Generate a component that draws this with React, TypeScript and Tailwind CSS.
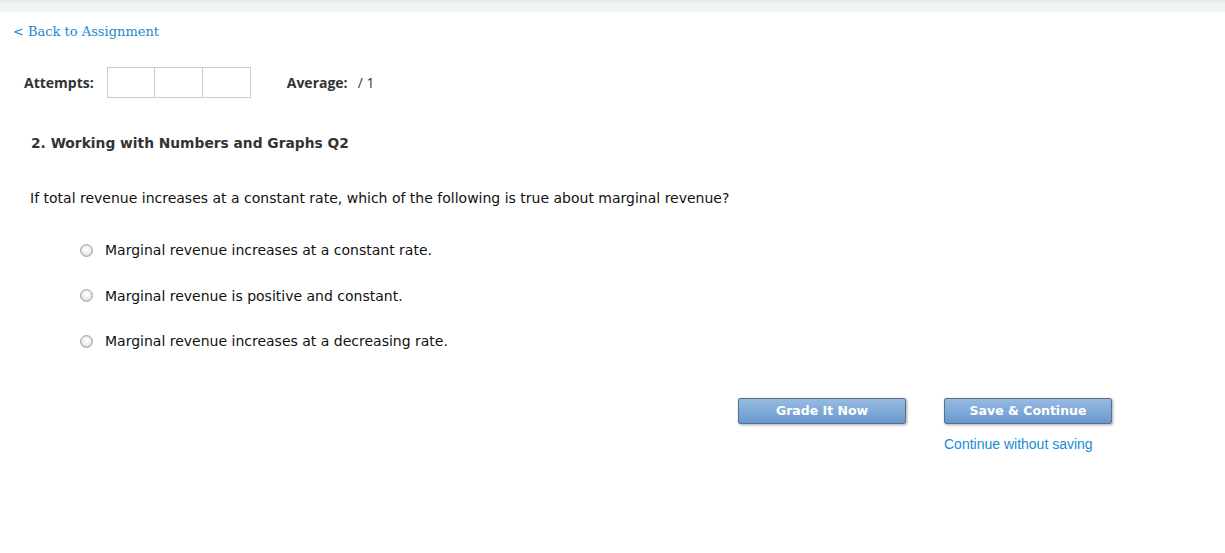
const options = [
  "Marginal revenue increases at a constant rate.",
  "Marginal revenue is positive and constant.",
  "Marginal revenue increases at a decreasing rate.",
];

function Radio() {
  return (
    <span className="inline-block h-[13px] w-[13px] shrink-0 rounded-full border border-[#a8a8a8] bg-[radial-gradient(circle_at_50%_40%,#ffffff_0%,#f0f0f0_45%,#cfcfcf_100%)] shadow-[inset_0_0_1px_#888]" />
  );
}

export default function App() {
  return (
    <div className="min-h-[553px] w-full bg-white">
      <div className="h-[12px] w-full border-t-2 border-[#e9edf0] bg-gradient-to-b from-[#f0f3f4] to-[#f4f6f5]" />

      <div className="pl-[13px] pt-[6px]">
        <a
          href="#"
          className="text-[13px] leading-[18px] text-[#2189d0] [font-family:'DejaVu_Serif','Liberation_Serif',serif]"
        >
          &lt; Back to Assignment
        </a>
      </div>

      <div className="mt-[25px] flex items-center pl-[24px] [font-family:'Open_Sans','Liberation_Sans',sans-serif]">
        <span className="text-[14px] font-bold text-[#333]">Attempts:</span>
        <div className="ml-[13px] flex">
          <div className="h-[31px] w-[48px] border border-[#cccccc]" />
          <div className="h-[31px] w-[48px] border border-l-0 border-[#cccccc]" />
          <div className="h-[31px] w-[48px] border border-l-0 border-[#cccccc]" />
        </div>
        <span className="ml-[36px] text-[14px] font-bold text-[#333]">Average:</span>
        <span className="ml-[10px] text-[14px] text-[#333]">/ 1</span>
      </div>

      <div className="[font-family:'DejaVu_Sans','Verdana',sans-serif] text-[#111]">
        <h2 className="mt-[36px] pl-[31px] text-[13.8px] font-bold leading-[18px] text-[#333]">
          2. Working with Numbers and Graphs Q2
        </h2>

        <p className="mt-[37px] pl-[30px] text-[14px] leading-[18px]">
          If total revenue increases at a constant rate, which of the following is true about marginal revenue?
        </p>

        <div className="mt-[34px] flex flex-col gap-[27.5px] pl-[80px]">
          {options.map((o) => (
            <label key={o} className="flex h-[18px] items-center">
              <Radio />
              <span className="ml-[12px] text-[14px] leading-[18px]">{o}</span>
            </label>
          ))}
        </div>
      </div>

      <div className="mt-[48px] flex pl-[738px]">
        <button className="h-[26px] w-[168px] rounded-[2px] border border-[#5d6f86] bg-gradient-to-b from-[#97bbe3] to-[#6798cd] text-[12.5px] font-bold text-white shadow-[1px_1px_3px_rgba(0,0,0,0.35)] [font-family:'DejaVu_Sans','Verdana',sans-serif]">
          Grade It Now
        </button>
        <div className="ml-[38px] flex flex-col">
          <button className="h-[26px] w-[168px] rounded-[2px] border border-[#5d6f86] bg-gradient-to-b from-[#97bbe3] to-[#6798cd] text-[12.5px] font-bold text-white shadow-[1px_1px_3px_rgba(0,0,0,0.35)] [font-family:'DejaVu_Sans','Verdana',sans-serif]">
            Save &amp; Continue
          </button>
          <a
            href="#"
            className="mt-[12px] text-[14px] leading-[16px] text-[#1a8ad4] [font-family:'Liberation_Sans',Arial,sans-serif]"
          >
            Continue without saving
          </a>
        </div>
      </div>
    </div>
  );
}
